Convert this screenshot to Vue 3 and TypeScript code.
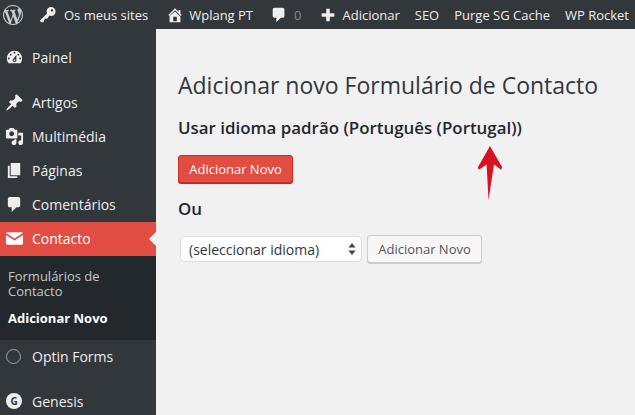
<script setup lang="ts">
interface MenuItem {
  label: string
  icon?: string
  ring?: boolean
  letter?: string
  active?: boolean
  gapBefore?: boolean
}

const ICONS: Record<string, string> = {
  wp: 'M20 10c0-5.51-4.49-10-10-10C4.48 0 0 4.49 0 10c0 5.52 4.48 10 10 10 5.51 0 10-4.48 10-10zM7.78 15.37L4.37 6.22c.55-.02 1.17-.08 1.17-.08.5-.06.44-1.13-.06-1.11 0 0-1.45.11-2.37.11-.18 0-.37 0-.58-.01C4.12 2.69 6.87 1.11 10 1.11c2.33 0 4.45.87 6.05 2.34-.68-.11-1.65.39-1.65 1.58 0 .74.45 1.36.9 2.1.35.61.55 1.36.55 2.46 0 1.49-1.4 5-1.4 5l-3.03-8.37c.54-.02.82-.17.82-.17.5-.05.44-1.25-.06-1.22 0 0-1.44.12-2.38.12-.87 0-2.33-.12-2.33-.12-.5-.03-.56 1.2-.06 1.22l.92.08 1.26 3.41zM17.41 10c.24-.64.74-1.87.43-4.25.7 1.29 1.05 2.71 1.05 4.25 0 3.29-1.73 6.24-4.4 7.78.97-2.59 1.94-5.2 2.92-7.78zM6.1 18.09C3.12 16.65 1.11 13.53 1.11 10c0-1.3.23-2.48.72-3.59C3.25 10.3 4.67 14.2 6.1 18.09zm4.03-6.63l2.58 6.98c-.86.29-1.76.45-2.71.45-.79 0-1.57-.11-2.29-.33.81-2.38 1.62-4.74 2.42-7.1z',
  key: 'M16.95 2.58c1.96 1.95 1.96 5.12 0 7.07-1.51 1.51-3.75 1.84-5.59 1.01l-1.87 3.31-2.99.31L5 18H2l-1-2 7.95-7.69c-.92-1.87-.62-4.18.93-5.73 1.95-1.96 5.12-1.96 7.07 0zm-2.51 3.79c.74 0 1.33-.6 1.33-1.34 0-.73-.59-1.33-1.33-1.33-.73 0-1.33.6-1.33 1.33 0 .74.6 1.34 1.33 1.34z',
  home: 'M16 8.5l1.53 1.53-1.06 1.06L10 4.62l-6.47 6.47-1.06-1.06L10 2.5l4 4v-2h2v4zm-6-2.46l6 5.99V18H4v-6.97zM12 17v-5H8v5h4z',
  comment: 'M5 2h9c1.1 0 2 .9 2 2v7c0 1.1-.9 2-2 2h-2l-5 5v-5H5c-1.1 0-2-.9-2-2V4c0-1.1.9-2 2-2z',
  plus: 'M8 3h4v5h5v4h-5v5H8v-5H3V8h5z',
  dashboard: 'M3.76 16h12.48c1.1-1.37 1.76-3.11 1.76-5 0-4.42-3.58-8-8-8s-8 3.58-8 8c0 1.89.66 3.63 1.76 5zM10 4c.55 0 1 .45 1 1s-.45 1-1 1-1-.45-1-1 .45-1 1-1zM6 6c.55 0 1 .45 1 1s-.45 1-1 1-1-.45-1-1 .45-1 1-1zm8 0c.55 0 1 .45 1 1s-.45 1-1 1-1-.45-1-1 .45-1 1-1zm-5.37 5.55L12 7v6c0 1.1-.9 2-2 2s-2-.9-2-2c0-.57.24-1.08.63-1.45zM4 10c.55 0 1 .45 1 1s-.45 1-1 1-1-.45-1-1 .45-1 1-1zm12 0c.55 0 1 .45 1 1s-.45 1-1 1-1-.45-1-1 .45-1 1-1zm-5 3c0-.55-.45-1-1-1s-1 .45-1 1 .45 1 1 1 1-.45 1-1z',
  post: 'M10.44 3.02l1.82-1.82 6.36 6.35-1.83 1.82c-1.05-.68-2.48-.57-3.41.36l-.75.75c-.92.93-1.04 2.35-.35 3.41l-1.83 1.82-2.41-2.41-2.8 2.79c-.42.42-3.38 2.71-3.8 2.29s1.86-3.39 2.28-3.81l2.79-2.79L4.1 9.36l1.83-1.82c1.05.69 2.48.57 3.4-.36l.75-.75c.93-.92 1.05-2.35.36-3.41z',
  media: 'M13 11V4c0-.55-.45-1-1-1h-1.67L9 1H5L3.67 3H2c-.55 0-1 .45-1 1v7c0 .55.45 1 1 1h10c.55 0 1-.45 1-1zM7 4.5c1.38 0 2.5 1.12 2.5 2.5S8.38 9.5 7 9.5 4.5 8.38 4.5 7 5.62 4.5 7 4.5zM14 6h5v10.5c0 1.38-1.12 2.5-2.5 2.5S14 17.88 14 16.5s1.12-2.5 2.5-2.5c.17 0 .34.02.5.05V9h-3V6zm-4 8.05V13h2v3.5c0 1.38-1.12 2.5-2.5 2.5S7 17.88 7 16.5 8.12 14 9.5 14c.17 0 .34.02.5.05z',
  page: 'M6 15V2h10v13H6zm-1 1h8v2H3V5h2v11z',
  mail: 'M2.500 3.500h15c.6 0 1.100.3 1.300.8L10 10 1.200 4.300c.2-.5.7-.8 1.300-.8zM1 6.300l9 5.900 9-5.900V15c0 .8-.7 1.500-1.500 1.500h-15C1.700 16.500 1 15.800 1 15z'
}

const topItems = [
  { icon: 'key', label: 'Os meus sites', gap: 7, after: 18 },
  { icon: 'home', label: 'Wplang PT', gap: 5, after: 17 },
  { icon: 'comment', label: '0', gap: 6, after: 18, muted: true },
  { icon: 'plus', label: 'Adicionar', gap: 5, after: 15 },
  { label: 'SEO', after: 15 },
  { label: 'Purge SG Cache', after: 15 },
  { label: 'WP Rocket', after: 0 }
]

const menuTop: MenuItem[] = [
  { label: 'Painel', icon: 'dashboard' },
  { label: 'Artigos', icon: 'post', gapBefore: true },
  { label: 'Multimédia', icon: 'media' },
  { label: 'Páginas', icon: 'page' },
  { label: 'Comentários', icon: 'comment' },
  { label: 'Contacto', icon: 'mail', active: true }
]

const menuBottom: MenuItem[] = [
  { label: 'Optin Forms', ring: true },
  { label: 'Genesis', letter: 'G', gapBefore: true }
]
</script>

<template>
  <div class="page">
    <header class="topbar">
      <svg class="wp-logo" viewBox="0 0 20 20"><path :d="ICONS.wp" /></svg>
      <div
        v-for="item in topItems"
        :key="item.label"
        class="top-item"
        :class="{ muted: item.muted }"
        :style="{ gap: `${item.gap ?? 0}px`, marginRight: `${item.after}px` }"
      >
        <svg v-if="item.icon" class="top-icon" viewBox="0 0 20 20"><path :d="ICONS[item.icon]" /></svg>
        <span>{{ item.label }}</span>
      </div>
    </header>

    <div class="body">
      <aside class="sidebar">
        <div
          v-for="item in menuTop"
          :key="item.label"
          class="menu-item"
          :class="{ active: item.active, spaced: item.gapBefore }"
        >
          <span class="menu-icon">
            <svg viewBox="0 0 20 20"><path :d="ICONS[item.icon!]" /></svg>
          </span>
          <span>{{ item.label }}</span>
        </div>
        <div class="submenu">
          <div class="sub-link">Formulários de Contacto</div>
          <div class="sub-link current">Adicionar Novo</div>
        </div>
        <div
          v-for="item in menuBottom"
          :key="item.label"
          class="menu-item"
          :class="{ spaced: item.gapBefore }"
        >
          <span class="menu-icon">
            <span v-if="item.ring" class="ring"></span>
            <span v-if="item.letter" class="letter">{{ item.letter }}</span>
          </span>
          <span>{{ item.label }}</span>
        </div>
      </aside>

      <main class="content">
        <h1>Adicionar novo Formulário de Contacto</h1>
        <h2>Usar idioma padrão (Português (Portugal))</h2>
        <button class="btn primary">Adicionar Novo</button>
        <h2 class="or">Ou</h2>
        <div class="select-row">
          <div class="select">
            <span>(seleccionar idioma)</span>
            <svg class="carets" viewBox="0 0 8 12"><path d="M4 0l3.500 4.500h-7zM4 12L.5 7.500h7z" /></svg>
          </div>
          <button class="btn">Adicionar Novo</button>
        </div>
        <svg class="arrow" viewBox="0 0 26 54">
          <path d="M13 0L25 21c.4 1.200-.6 2.600-2 2l-6-4.500L11.500 54 9.600 18.500 3 23c-1.400.6-2.500-.8-2-2z" />
        </svg>
      </main>
    </div>
  </div>
</template>

<style>
html, body {
  margin: 0;
  background: #f1f1f1;
}
</style>

<style scoped>
.page {
  width: 635px;
  height: 415px;
  overflow: hidden;
  font-family: "Open Sans", "Liberation Sans", sans-serif;
  color: #32373c;
}

.topbar {
  height: 29px;
  background: #32373c;
  color: #eee;
  display: flex;
  align-items: center;
  padding-left: 3px;
  font-size: 13px;
  white-space: nowrap;
}
.wp-logo {
  width: 20px;
  height: 20px;
  fill: #c8cbcd;
  margin-right: 16px;
}
.top-item {
  display: flex;
  align-items: center;
}
.top-item.muted {
  color: #82878c;
}
.top-icon {
  width: 18px;
  height: 18px;
  fill: #eee;
}

.body {
  display: flex;
  height: 386px;
}

.sidebar {
  width: 156px;
  flex-shrink: 0;
  background: #32373c;
  padding-top: 11px;
  color: #eee;
  font-size: 14px;
}
.menu-item {
  position: relative;
  height: 34px;
  display: flex;
  align-items: center;
}
.menu-item.spaced {
  margin-top: 11.5px;
}
.menu-item.active {
  background: #e14d43;
  color: #fff;
}
.menu-item.active::after {
  content: "";
  position: absolute;
  right: 0;
  top: 10px;
  border: 7px solid transparent;
  border-right-color: #f1f1f1;
  border-left-width: 0;
}
.menu-icon {
  width: 32px;
  padding-left: 5px;
  box-sizing: border-box;
  display: flex;
  align-items: center;
}
.menu-icon svg {
  width: 19px;
  height: 19px;
  fill: #eee;
}
.active .menu-icon svg {
  fill: #fff;
}
.ring {
  width: 13px;
  height: 13px;
  margin-left: 1px;
  border: 1px solid #a0a5aa;
  border-radius: 50%;
}
.letter {
  width: 16px;
  height: 16px;
  margin-left: 1px;
  border-radius: 50%;
  background: #eee;
  color: #32373c;
  font-size: 10px;
  font-weight: 700;
  line-height: 16px;
  text-align: center;
}

.submenu {
  background: #23282d;
  height: 84px;
  padding: 13px 8px 0;
  box-sizing: border-box;
  font-size: 13px;
  line-height: 15.5px;
  color: #c5c8ca;
}
.sub-link.current {
  margin-top: 11px;
  color: #fff;
  font-weight: 700;
}
.submenu + .menu-item + .menu-item {
  margin-top: 10.5px;
}

.content {
  position: relative;
  flex: 1;
  padding-left: 22px;
}
h1 {
  margin: 0;
  padding-top: 41px;
  font-size: 23px;
  line-height: 30px;
  font-weight: 400;
  color: #32373c;
  white-space: nowrap;
}
h2 {
  margin: 17px 0 0;
  font-size: 16.9px;
  line-height: 22px;
  font-weight: 600;
  color: #23282d;
  white-space: nowrap;
}
h2.or {
  margin-top: 15px;
}
.btn {
  display: block;
  height: 28px;
  width: 115px;
  padding: 0;
  border: 1px solid #ccc;
  border-radius: 3px;
  background: #f7f7f7;
  box-shadow: 0 1px 0 #ccc;
  font-family: inherit;
  font-size: 13px;
  color: #555;
}
.btn.primary {
  margin-top: 16px;
  background: #e14d43;
  border-color: #d02c21;
  box-shadow: 0 1px 0 #ba281e;
  color: #fff;
}
.select-row {
  display: flex;
  align-items: center;
  gap: 5px;
  margin-top: 15px;
  margin-left: 2px;
}
.select {
  width: 182px;
  height: 26px;
  box-sizing: border-box;
  display: flex;
  align-items: center;
  justify-content: space-between;
  padding: 0 5px 0 8px;
  background: #fff;
  border: 1px solid #ddd;
  border-radius: 5px;
  font-size: 14px;
  color: #32373c;
}
.carets {
  width: 8px;
  height: 12px;
  fill: #444;
}
.arrow {
  position: absolute;
  left: 321px;
  top: 117px;
  width: 26px;
  height: 54px;
  fill: #d9121f;
}
</style>
